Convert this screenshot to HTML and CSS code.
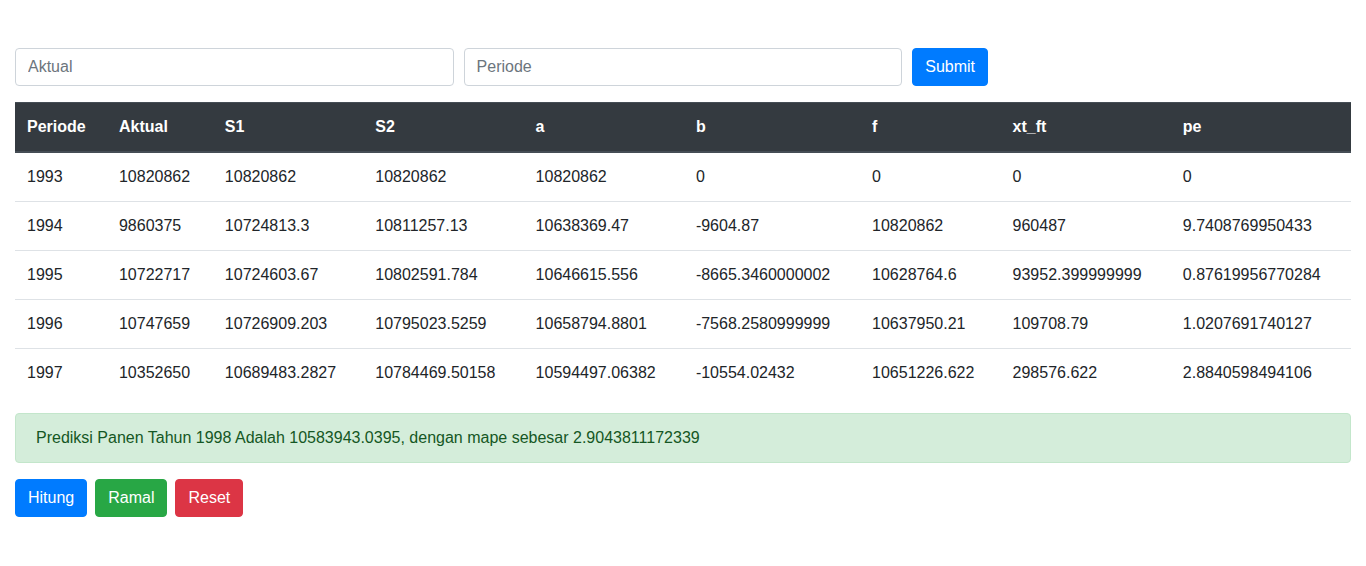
FILE: index.html
```html
<!DOCTYPE html>
<html lang="id">
<head>
<meta charset="UTF-8">
<title>Peramalan Panen</title>
<link rel="stylesheet" href="styles.css">
</head>
<body>
  <div class="container">
    <form class="input-form" onsubmit="return false">
      <input type="text" class="field" placeholder="Aktual">
      <input type="text" class="field" placeholder="Periode">
      <button type="submit" class="btn btn-blue">Submit</button>
    </form>

    <table class="data-table">
      <thead>
        <tr>
          <th>Periode</th>
          <th>Aktual</th>
          <th>S1</th>
          <th>S2</th>
          <th>a</th>
          <th>b</th>
          <th>f</th>
          <th>xt_ft</th>
          <th>pe</th>
        </tr>
      </thead>
      <tbody>
        <tr>
          <td>1993</td><td>10820862</td><td>10820862</td><td>10820862</td><td>10820862</td><td>0</td><td>0</td><td>0</td><td>0</td>
        </tr>
        <tr>
          <td>1994</td><td>9860375</td><td>10724813.3</td><td>10811257.13</td><td>10638369.47</td><td>-9604.87</td><td>10820862</td><td>960487</td><td>9.7408769950433</td>
        </tr>
        <tr>
          <td>1995</td><td>10722717</td><td>10724603.67</td><td>10802591.784</td><td>10646615.556</td><td>-8665.3460000002</td><td>10628764.6</td><td>93952.399999999</td><td>0.87619956770284</td>
        </tr>
        <tr>
          <td>1996</td><td>10747659</td><td>10726909.203</td><td>10795023.5259</td><td>10658794.8801</td><td>-7568.2580999999</td><td>10637950.21</td><td>109708.79</td><td>1.0207691740127</td>
        </tr>
        <tr>
          <td>1997</td><td>10352650</td><td>10689483.2827</td><td>10784469.50158</td><td>10594497.06382</td><td>-10554.02432</td><td>10651226.622</td><td>298576.622</td><td>2.8840598494106</td>
        </tr>
      </tbody>
    </table>

    <div class="alert">Prediksi Panen Tahun 1998 Adalah 10583943.0395, dengan mape sebesar 2.9043811172339</div>

    <div class="actions">
      <button class="btn btn-blue">Hitung</button>
      <button class="btn btn-green">Ramal</button>
      <button class="btn btn-red">Reset</button>
    </div>
  </div>
</body>
</html>
```

FILE: styles.css
```css
body {
  margin: 0;
  font-family: "Liberation Sans", Arial, sans-serif;
  font-size: 16px;
  line-height: 1.5;
  color: #212529;
  background: #fff;
}

.container {
  padding: 48px 15px 0;
}

.input-form {
  display: flex;
  gap: 10px;
  max-width: 973px;
  margin-bottom: 16px;
}

.field {
  flex: 1;
  min-width: 0;
  height: 38px;
  box-sizing: border-box;
  padding: 6px 12px;
  font-family: inherit;
  font-size: 16px;
  color: #495057;
  border: 1px solid #ced4da;
  border-radius: 4px;
}

.field::placeholder {
  color: #6c757d;
}

.btn {
  font-family: inherit;
  font-size: 16px;
  line-height: 1.5;
  padding: 6px 12px;
  border: 1px solid transparent;
  border-radius: 4px;
  color: #fff;
  cursor: pointer;
}

.btn-blue {
  background: #007bff;
  border-color: #007bff;
}

.btn-green {
  background: #28a745;
  border-color: #28a745;
}

.btn-red {
  background: #dc3545;
  border-color: #dc3545;
}

.data-table {
  width: 100%;
  border-collapse: collapse;
  margin-bottom: 16px;
}

.data-table th,
.data-table td {
  padding: 12px;
  text-align: left;
  vertical-align: top;
  border-top: 1px solid #dee2e6;
}

.data-table thead th {
  background: #343a40;
  color: #fff;
  font-weight: bold;
  border-top-color: #454d55;
  border-bottom: 2px solid #454d55;
}

.data-table tbody tr:first-child td {
  border-top: 0;
}

.alert {
  padding: 12px 20px;
  margin-bottom: 16px;
  color: #155724;
  background: #d4edda;
  border: 1px solid #c3e6cb;
  border-radius: 4px;
}

.actions {
  display: flex;
  gap: 8px;
}
```
